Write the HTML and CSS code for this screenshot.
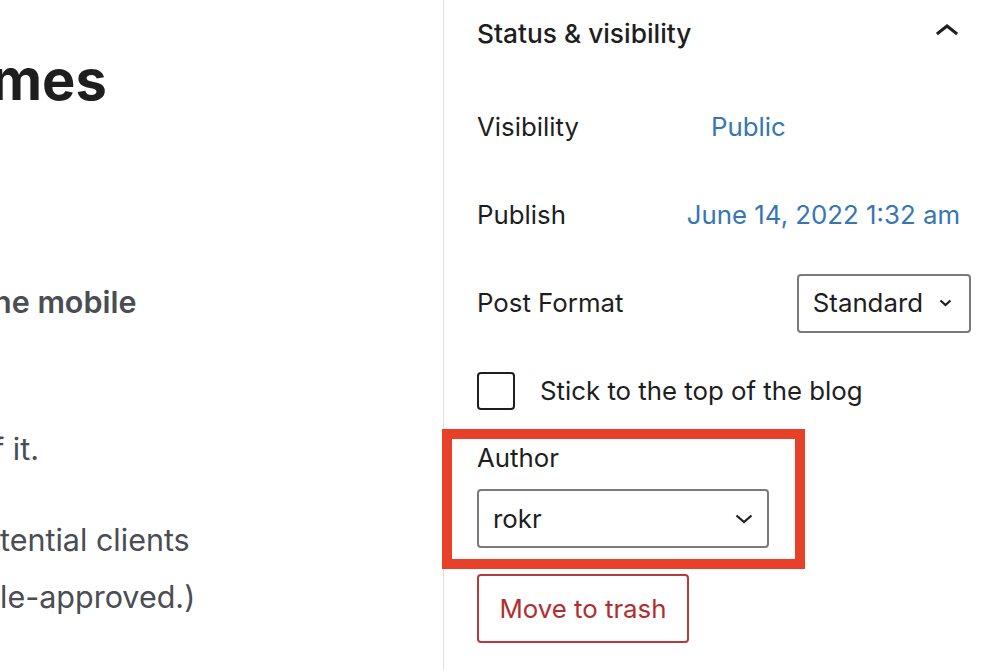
FILE: index.html
```html
<!DOCTYPE html>
<html lang="en">
<head>
    <meta charset="UTF-8">
    <meta name="viewport" content="width=device-width, initial-scale=1.0">
    <title>Edit Post</title>
    <link rel="stylesheet" href="styles.css">
</head>
<body>

    <div class="editor">
        <!-- Post canvas (cut off on the left) -->
        <main class="canvas">
            <h1 class="post-title">mes</h1>
            <p class="lead">ne mobile</p>
            <p class="tail">f it.</p>
            <p class="clients">tential clients<br>le-approved.)</p>
        </main>

        <!-- Settings sidebar -->
        <aside class="sidebar">
            <div class="panel-header">
                <h2>Status &amp; visibility</h2>
                <svg class="toggle" viewBox="0 0 24 24" aria-hidden="true">
                    <path d="M6.5 12.4L12 8l5.5 4.4-.9 1.2L12 10l-4.6 3.6-.9-1.2z"></path>
                </svg>
            </div>

            <div class="panel-body">
                <div class="row">
                    <span class="label label-wide">Visibility</span>
                    <button class="link-btn">Public</button>
                </div>
                <div class="row">
                    <span class="label">Publish</span>
                    <button class="link-btn date">June 14, 2022 1:32 am</button>
                </div>
                <div class="row">
                    <span class="label">Post Format</span>
                    <div class="select select-small">
                        <span>Standard</span>
                        <svg width="13" height="8" viewBox="0 0 13 8" aria-hidden="true">
                            <polyline points="1.5,1.5 6.5,6 11.5,1.5"></polyline>
                        </svg>
                    </div>
                </div>
                <label class="row">
                    <span class="checkbox"></span>
                    Stick to the top of the blog
                </label>

                <div class="author">
                    <div class="label">Author</div>
                    <div class="select select-wide">
                        <span>rokr</span>
                        <svg width="18" height="10" viewBox="0 0 18 10" aria-hidden="true">
                            <polyline points="1.5,1.5 9,8 16.5,1.5"></polyline>
                        </svg>
                    </div>
                </div>

                <button class="trash-btn">Move to trash</button>
            </div>
        </aside>
    </div>

</body>
</html>
```

FILE: styles.css
```css
body {
    margin: 0;
    background-color: #fff;
    color: #1e1e1e;
    font-family: Inter, "Liberation Sans", Arial, sans-serif;
}

.editor {
    display: flex;
    height: 670px;
    overflow: hidden;
}

/* Post canvas */
.canvas {
    width: 443px;
    flex: none;
    overflow: hidden;
    color: #4a4d53;
}

.post-title {
    margin: 47px 0 0;
    font-size: 56px;
    line-height: 1.2;
    font-weight: 700;
    color: #1e1e1e;
    text-indent: -9px;
    white-space: nowrap;
}

.canvas p {
    margin: 0;
    font-size: 30.5px;
    line-height: 57px;
    white-space: nowrap;
}

.canvas .lead {
    margin-top: 159px;
    font-weight: 600;
    text-indent: -7px;
}

.canvas .tail {
    margin-top: 90px;
    text-indent: -7px;
}

.canvas .clients {
    margin-top: 34px;
}

/* Sidebar */
.sidebar {
    flex: 1;
    border-left: 1px solid #e0e0e0;
    padding: 0 29px 0 33px;
    font-size: 25.8px;
}

.panel-header {
    display: flex;
    align-items: center;
    justify-content: space-between;
    height: 68px;
}

.panel-header h2 {
    margin: 0;
    font-size: 26.3px;
    font-weight: 500;
    line-height: 30px;
}

.toggle {
    width: 48px;
    height: 48px;
    margin-top: -4px;
    fill: #1e1e1e;
}

.panel-body {
    padding-top: 29.5px;
}

.row {
    display: flex;
    align-items: center;
    height: 59px;
    line-height: 30px;
}

.row + .row {
    margin-top: 29px;
}

.label-wide {
    width: 234px;
}

.link-btn {
    background: none;
    border: none;
    padding: 0;
    font: inherit;
    color: #3676b3;
    cursor: pointer;
}

.date {
    margin-left: auto;
    margin-right: 11px;
}

/* Select boxes */
.select {
    display: flex;
    align-items: center;
    box-sizing: border-box;
    height: 59px;
    border: 2px solid #7a7a7a;
    border-radius: 4px;
    background-color: #fff;
}

.select svg {
    fill: none;
    stroke: #1e1e1e;
    stroke-width: 2.2;
}

.select-small {
    margin-left: auto;
    padding: 0 17px 0 14px;
    gap: 16px;
}

.select-wide {
    width: 292px;
    justify-content: space-between;
    padding: 0 14px;
}

.checkbox {
    width: 38px;
    height: 38px;
    box-sizing: border-box;
    border: 2px solid #1e1e1e;
    border-radius: 4px;
    margin-right: 25px;
}

/* Author block, marked with a red frame */
.author {
    position: relative;
    margin-top: 22px;
}

.author::before {
    content: "";
    position: absolute;
    left: -35px;
    top: -13.5px;
    width: 363px;
    height: 140px;
    box-sizing: border-box;
    border: 10px solid #e8412a;
    pointer-events: none;
}

.author .label {
    line-height: 30px;
    margin-bottom: 16.5px;
}

.trash-btn {
    display: block;
    margin-top: 26px;
    width: 212px;
    height: 69px;
    background-color: #fff;
    border: 2px solid #b93a3b;
    border-radius: 4px;
    color: #b32d2e;
    font: inherit;
    cursor: pointer;
}
```
